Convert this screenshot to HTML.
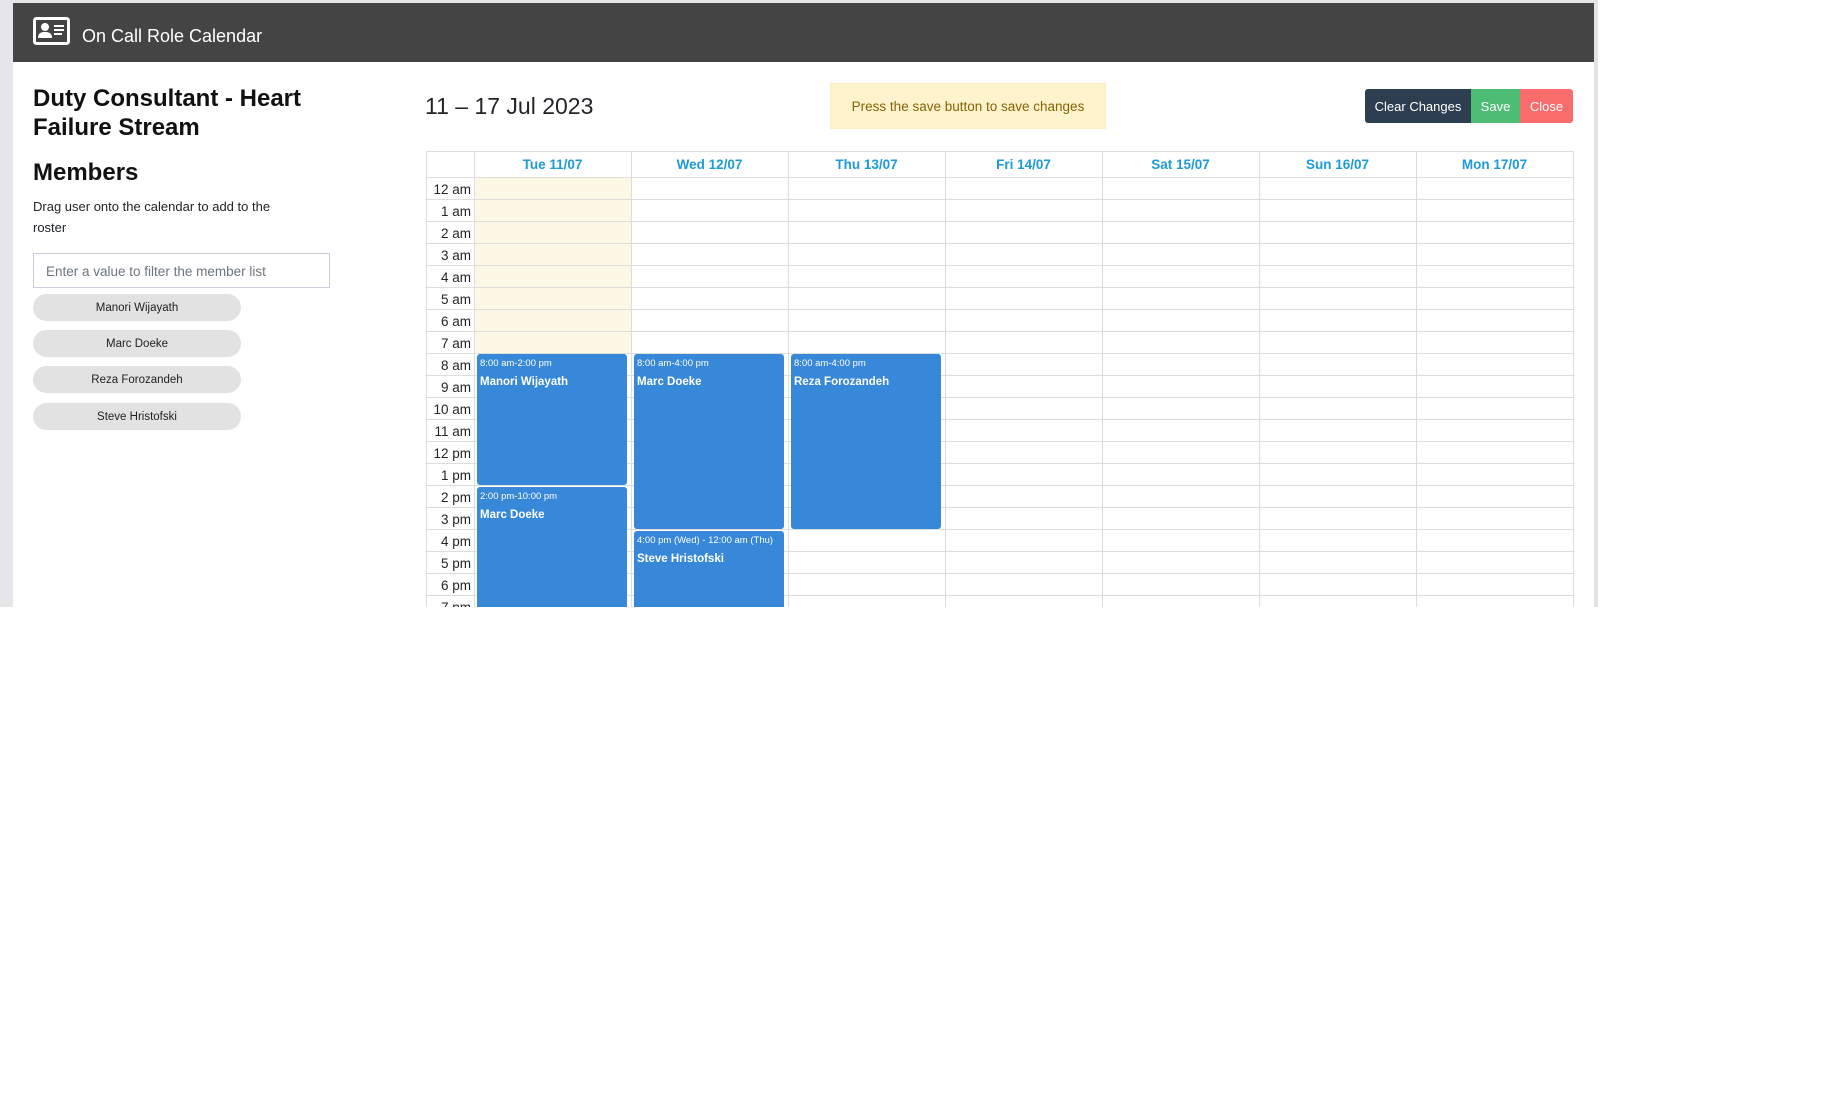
<!DOCTYPE html>
<html><head><meta charset="utf-8"><style>
*{box-sizing:border-box;margin:0;padding:0}
body{width:1834px;height:1120px;background:#fff;font-family:"Liberation Sans",sans-serif;position:relative;overflow:hidden;color:#212529}
.a{position:absolute}
.pill{position:absolute;left:33px;width:208px;height:27px;border-radius:14px;background:#e2e2e2;font-size:11.5px;text-align:center;line-height:28px;color:#222}
.hd{position:absolute;top:152px;height:26px;line-height:26px;text-align:center;color:#1b9bd7;font-weight:bold;font-size:13.5px}
.tl{position:absolute;left:426px;width:45px;text-align:right;font-size:13.5px;height:22px;line-height:23px}
.ev{position:absolute;background:#3788d8;border:1px solid #3788d8;border-radius:3px;color:#fff;padding:2px 2px;overflow:hidden}
.ev .t{font-size:9.5px;line-height:14px}
.ev .n{font-size:11.5px;font-weight:bold;margin-top:5px}
</style></head><body>
<div class="a" style="left:0;top:0;width:13px;height:607px;background:#e6e6e8"></div>
<div class="a" style="left:0;top:0;width:1598px;height:3px;background:#e6e6e8"></div>
<div class="a" style="left:1594px;top:0;width:4px;height:607px;background:#e3e3e5"></div>
<div class="a" style="left:13px;top:3px;width:1581px;height:59px;background:#444"></div>
<svg class="a" style="left:33px;top:17px" width="37" height="28" viewBox="0 0 37 28"><rect x="1.5" y="1.5" width="34" height="25" rx="2" fill="none" stroke="#fff" stroke-width="3"/><circle cx="12" cy="10" r="4" fill="#fff"/><path d="M5 21c0-5 3-6 7-6s7 1 7 6z" fill="#fff"/><rect x="21" y="8" width="10" height="2" fill="#fff"/><rect x="21" y="12" width="10" height="2" fill="#fff"/><rect x="21" y="16" width="8" height="2" fill="#fff"/></svg>
<div class="a" style="left:82px;top:26px;color:#fff;font-size:18px">On Call Role Calendar</div>

<div class="a" style="left:33px;top:84px;font-size:24px;font-weight:bold;line-height:29px;color:#111">Duty Consultant - Heart<br>Failure Stream</div>
<div class="a" style="left:33px;top:159px;font-size:24px;font-weight:bold;color:#111">Members</div>
<div class="a" style="left:33px;top:196px;font-size:13px;line-height:21px;width:260px">Drag user onto the calendar to add to the roster</div>
<div class="a" style="left:33px;top:253px;width:297px;height:35px;border:1px solid #ccd;padding-left:12px;line-height:35px;font-size:13.5px;color:#6c757d">Enter a value to filter the member list</div>
<div class="pill" style="top:294px">Manori Wijayath</div>
<div class="pill" style="top:330px">Marc Doeke</div>
<div class="pill" style="top:366px">Reza Forozandeh</div>
<div class="pill" style="top:403px">Steve Hristofski</div>

<div class="a" style="left:425px;top:93px;font-size:23px">11 – 17 Jul 2023</div>
<div class="a" style="left:830px;top:83px;width:276px;height:46px;background:#fff3cd;border:1px solid #ffeeba;color:#856404;font-size:13.5px;text-align:center;line-height:46px">Press the save button to save changes</div>
<div class="a" style="left:1365px;top:89px;width:106px;height:34px;background:#2c3e50;color:#fff;font-size:13px;text-align:center;line-height:36px;border-radius:3px 0 0 3px">Clear Changes</div>
<div class="a" style="left:1471px;top:89px;width:49px;height:34px;background:#4dbd74;color:#fff;font-size:13px;text-align:center;line-height:36px">Save</div>
<div class="a" style="left:1520px;top:89px;width:53px;height:34px;background:#f86c6b;color:#fff;font-size:13px;text-align:center;line-height:36px;border-radius:0 3px 3px 0">Close</div>

<div class="a" style="left:0;top:0;width:1834px;height:607px;overflow:hidden">
<div class="a" style="left:475px;top:177px;width:156px;height:176px;background:#fcf8e3"></div>
<svg class="a" style="left:426px;top:151px" width="1148" height="460">
<g stroke="#ddd" stroke-width="1" fill="none">
<rect x="0.5" y="0.5" width="1147" height="470"/>
<line x1="48.5" y1="0" x2="48.5" y2="470"/>
<line x1="205.5" y1="0" x2="205.5" y2="470"/><line x1="362.5" y1="0" x2="362.5" y2="470"/><line x1="519.5" y1="0" x2="519.5" y2="470"/><line x1="676.5" y1="0" x2="676.5" y2="470"/><line x1="833.5" y1="0" x2="833.5" y2="470"/><line x1="990.5" y1="0" x2="990.5" y2="470"/>
<line x1="0" y1="26.5" x2="1148" y2="26.5"/><line x1="0" y1="48.5" x2="1148" y2="48.5"/><line x1="0" y1="70.5" x2="1148" y2="70.5"/><line x1="0" y1="92.5" x2="1148" y2="92.5"/><line x1="0" y1="114.5" x2="1148" y2="114.5"/><line x1="0" y1="136.5" x2="1148" y2="136.5"/><line x1="0" y1="158.5" x2="1148" y2="158.5"/><line x1="0" y1="180.5" x2="1148" y2="180.5"/><line x1="0" y1="202.5" x2="1148" y2="202.5"/><line x1="0" y1="224.5" x2="1148" y2="224.5"/><line x1="0" y1="246.5" x2="1148" y2="246.5"/><line x1="0" y1="268.5" x2="1148" y2="268.5"/><line x1="0" y1="290.5" x2="1148" y2="290.5"/><line x1="0" y1="312.5" x2="1148" y2="312.5"/><line x1="0" y1="334.5" x2="1148" y2="334.5"/><line x1="0" y1="356.5" x2="1148" y2="356.5"/><line x1="0" y1="378.5" x2="1148" y2="378.5"/><line x1="0" y1="400.5" x2="1148" y2="400.5"/><line x1="0" y1="422.5" x2="1148" y2="422.5"/><line x1="0" y1="444.5" x2="1148" y2="444.5"/>
</g></svg>
<div class="hd" style="left:474px;width:157px">Tue 11/07</div>
<div class="hd" style="left:631px;width:157px">Wed 12/07</div>
<div class="hd" style="left:788px;width:157px">Thu 13/07</div>
<div class="hd" style="left:945px;width:157px">Fri 14/07</div>
<div class="hd" style="left:1102px;width:157px">Sat 15/07</div>
<div class="hd" style="left:1259px;width:157px">Sun 16/07</div>
<div class="hd" style="left:1416px;width:157px">Mon 17/07</div>
<div class="tl" style="top:178px">12 am</div><div class="tl" style="top:200px">1 am</div><div class="tl" style="top:222px">2 am</div><div class="tl" style="top:244px">3 am</div><div class="tl" style="top:266px">4 am</div><div class="tl" style="top:288px">5 am</div><div class="tl" style="top:310px">6 am</div><div class="tl" style="top:332px">7 am</div><div class="tl" style="top:354px">8 am</div><div class="tl" style="top:376px">9 am</div><div class="tl" style="top:398px">10 am</div><div class="tl" style="top:420px">11 am</div><div class="tl" style="top:442px">12 pm</div><div class="tl" style="top:464px">1 pm</div><div class="tl" style="top:486px">2 pm</div><div class="tl" style="top:508px">3 pm</div><div class="tl" style="top:530px">4 pm</div><div class="tl" style="top:552px">5 pm</div><div class="tl" style="top:574px">6 pm</div><div class="tl" style="top:596px">7 pm</div>
<div class="ev" style="left:477px;top:354px;width:150px;height:131px"><div class="t">8:00 am-2:00 pm</div><div class="n">Manori Wijayath</div></div>
<div class="ev" style="left:477px;top:487px;width:150px;height:150px"><div class="t">2:00 pm-10:00 pm</div><div class="n">Marc Doeke</div></div>
<div class="ev" style="left:634px;top:354px;width:150px;height:175px"><div class="t">8:00 am-4:00 pm</div><div class="n">Marc Doeke</div></div>
<div class="ev" style="left:634px;top:531px;width:150px;height:120px"><div class="t">4:00 pm (Wed) - 12:00 am (Thu)</div><div class="n">Steve Hristofski</div></div>
<div class="ev" style="left:791px;top:354px;width:150px;height:175px"><div class="t">8:00 am-4:00 pm</div><div class="n">Reza Forozandeh</div></div>
</div>
</body></html>
